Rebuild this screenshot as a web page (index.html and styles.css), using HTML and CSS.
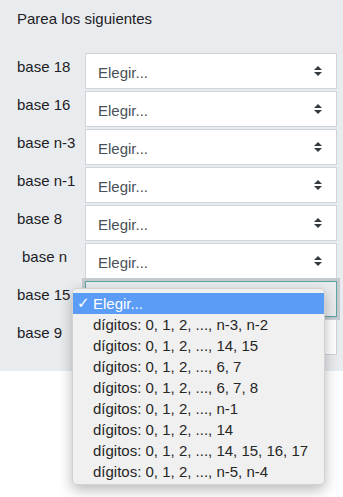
FILE: index.html
```html
<!DOCTYPE html>
<html lang="es">
<head>
<meta charset="utf-8">
<title>Parea los siguientes</title>
<link rel="stylesheet" href="styles.css">
</head>
<body>
<div class="que">
  <div class="title">Parea los siguientes</div>
  <div class="rows">
    <div class="row"><span class="lbl">base 18</span><div class="sel"><span>Elegir...</span><svg class="arrow" viewBox="0 0 4 5" width="8" height="10"><path d="M2 0L0 2h4zm0 5L0 3h4z"/></svg></div></div>
    <div class="row"><span class="lbl">base 16</span><div class="sel"><span>Elegir...</span><svg class="arrow" viewBox="0 0 4 5" width="8" height="10"><path d="M2 0L0 2h4zm0 5L0 3h4z"/></svg></div></div>
    <div class="row"><span class="lbl">base n-3</span><div class="sel"><span>Elegir...</span><svg class="arrow" viewBox="0 0 4 5" width="8" height="10"><path d="M2 0L0 2h4zm0 5L0 3h4z"/></svg></div></div>
    <div class="row"><span class="lbl">base n-1</span><div class="sel"><span>Elegir...</span><svg class="arrow" viewBox="0 0 4 5" width="8" height="10"><path d="M2 0L0 2h4zm0 5L0 3h4z"/></svg></div></div>
    <div class="row"><span class="lbl">base 8</span><div class="sel"><span>Elegir...</span><svg class="arrow" viewBox="0 0 4 5" width="8" height="10"><path d="M2 0L0 2h4zm0 5L0 3h4z"/></svg></div></div>
    <div class="row"><span class="lbl indent">base n</span><div class="sel"><span>Elegir...</span><svg class="arrow" viewBox="0 0 4 5" width="8" height="10"><path d="M2 0L0 2h4zm0 5L0 3h4z"/></svg></div></div>
    <div class="row"><span class="lbl">base 15</span><div class="sel focus"><span class="hidden">Elegir...</span></div></div>
    <div class="row"><span class="lbl">base 9</span><div class="sel"><span class="hidden">Elegir...</span></div></div>
  </div>
  <ul class="menu">
    <li class="active"><span class="check">✓</span>Elegir...</li>
    <li>dígitos: 0, 1, 2, ..., n-3, n-2</li>
    <li>dígitos: 0, 1, 2, ..., 14, 15</li>
    <li>dígitos: 0, 1, 2, ..., 6, 7</li>
    <li>dígitos: 0, 1, 2, ..., 6, 7, 8</li>
    <li>dígitos: 0, 1, 2, ..., n-1</li>
    <li>dígitos: 0, 1, 2, ..., 14</li>
    <li>dígitos: 0, 1, 2, ..., 14, 15, 16, 17</li>
    <li>dígitos: 0, 1, 2, ..., n-5, n-4</li>
  </ul>
</div>
</body>
</html>
```

FILE: styles.css
```css
html, body {
  margin: 0;
  padding: 0;
  background: #ffffff;
  min-height: 497px;
}

body {
  font-family: "Liberation Sans", Arial, sans-serif;
  font-size: 15px;
  color: #1d2125;
}

.que {
  position: relative;
  background: #e9ecef;
  height: 371px;
  box-sizing: border-box;
  padding: 9px 6px 0 17px;
}

.title {
  line-height: 20px;
  height: 20px;
  margin-bottom: 24px;
}

.rows {
  display: flex;
  flex-direction: column;
  gap: 2px;
}

.row {
  display: flex;
  align-items: flex-start;
}

.lbl {
  width: 68px;
  flex: none;
  line-height: 20px;
  padding-top: 4px;
  box-sizing: border-box;
}

.lbl.indent {
  padding-left: 5px;
}

.sel {
  flex: 1;
  height: 36px;
  box-sizing: border-box;
  background: #ffffff;
  border: 1px solid #ced4da;
  display: flex;
  align-items: center;
  padding: 3px 14px 0 12px;
  color: #495057;
  line-height: 20px;
}

.sel .hidden {
  visibility: hidden;
}

.sel .arrow {
  margin-left: auto;
  margin-top: -3px;
  fill: #343a40;
  flex: none;
}

.sel.focus {
  background: #e9ecef;
  border-color: #5ea3a4;
  box-shadow: 0 0 0 3px #c4cacd;
}

.menu {
  position: absolute;
  left: 72px;
  top: 288px;
  width: 253px;
  height: 197px;
  box-sizing: border-box;
  margin: 0;
  padding: 4px 0;
  list-style: none;
  background: #f0f0f0;
  border: 1px solid rgba(0, 0, 0, 0.12);
  border-radius: 5px;
  box-shadow: 0 5px 14px rgba(0, 0, 0, 0.28);
  color: #262626;
  overflow: hidden;
  z-index: 2;
}

.menu li {
  position: relative;
  height: 21px;
  line-height: 21px;
  padding-left: 20px;
  white-space: nowrap;
}

.menu li.active {
  background: #5b9cf6;
  color: #ffffff;
}

.menu .check {
  position: absolute;
  left: 4px;
  top: 0;
  font-family: "DejaVu Sans", sans-serif;
  font-size: 15px;
  font-weight: bold;
}
```
